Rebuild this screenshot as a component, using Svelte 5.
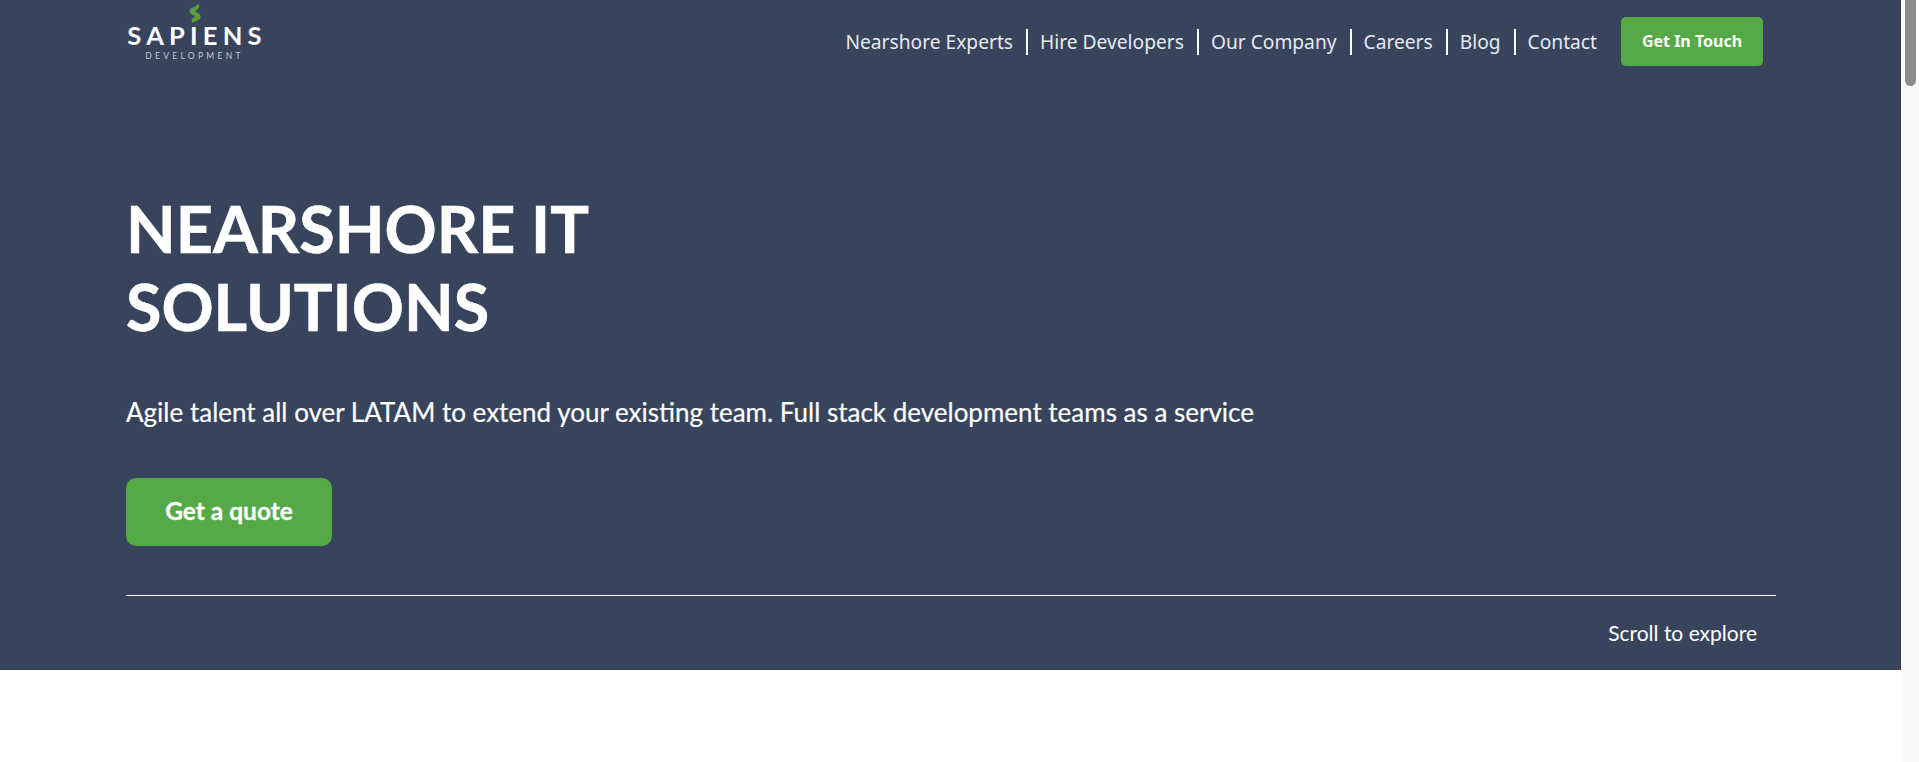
<script lang="ts">
	const links = ['Nearshore Experts', 'Hire Developers', 'Our Company', 'Careers', 'Blog', 'Contact'];
</script>

<div class="page">
	<main class="content">
		<section class="hero">
			<header class="topbar">
				<a class="logo" href="#home">
					<svg class="logo-mark" viewBox="0 0 12 20" aria-hidden="true">
						<path d="M9.5 0 C11.5 3 9.5 5.5 7 6.8 C6 7.4 6 8 7 8.4 C10.5 9.8 12.5 11.5 11.7 14.5 C11 17 7 18 2.8 20 C1.8 17 3 15 5 13.8 C6 13.2 6 12.6 5 12.2 C1.5 10.8 -0.3 9.5 0.2 7 C0.8 3.8 6.5 3.5 9.5 0 Z" />
					</svg>
					<span class="logo-name">SAPIENS</span>
					<span class="logo-sub">DEVELOPMENT</span>
				</a>
				<nav class="nav">
					<ul>
						{#each links as link}
							<li><a href="#{link}">{link}</a></li>
						{/each}
					</ul>
					<a class="touch" href="#touch">Get In Touch</a>
				</nav>
			</header>

			<div class="intro">
				<h1>NEARSHORE IT<br />SOLUTIONS</h1>
				<p>Agile talent all over LATAM to extend your existing team. Full stack development teams as a service</p>
				<a class="quote" href="#quote">Get a quote</a>
			</div>

			<div class="explore">
				<span>Scroll to explore</span>
			</div>
		</section>
	</main>
	<div class="scrollbar"><div class="thumb"></div></div>
</div>

<style>
	:global(body) {
		margin: 0;
		background: #fff;
		overflow: hidden;
	}

	.page {
		display: flex;
		height: 762px;
		overflow: hidden;
	}

	.content {
		flex: 1;
		min-width: 0;
	}

	.hero {
		height: 670px;
		box-sizing: border-box;
		background: #38445c;
		padding: 0 126px;
		color: #fff;
		font-family: 'Lato', sans-serif;
		display: flex;
		flex-direction: column;
	}

	.topbar {
		display: flex;
		justify-content: space-between;
		height: 66px;
		padding-right: 12px;
	}

	.logo {
		display: flex;
		flex-direction: column;
		align-items: center;
		width: 137px;
		color: #fff;
		text-decoration: none;
	}

	.logo-mark {
		width: 12px;
		height: 19px;
		margin-top: 4px;
		fill: #5a9e3f;
	}

	.logo-name {
		margin-right: -5px;
		font-size: 25.5px;
		font-weight: 700;
		line-height: 24px;
		letter-spacing: 5.2px;
		white-space: nowrap;
	}

	.logo-sub {
		margin-top: 4px;
		font-size: 8.5px;
		line-height: 10px;
		letter-spacing: 3.3px;
		color: #c5c9d1;
		white-space: nowrap;
	}

	.nav {
		display: flex;
		align-items: flex-start;
		gap: 24px;
		padding-top: 17px;
	}

	.nav ul {
		display: flex;
		list-style: none;
		margin: 12px 0 0;
		padding: 0;
		font-family: 'Noto Sans', sans-serif;
		font-size: 19.2px;
		line-height: 26px;
	}

	.nav li + li {
		border-left: 2px solid #fff;
		margin-left: 13px;
		padding-left: 12px;
	}

	.nav li a {
		color: #e6e9ee;
		text-decoration: none;
		white-space: nowrap;
	}

	.touch {
		width: 142px;
		height: 49px;
		box-sizing: border-box;
		padding-top: 13px;
		background: #55aa47;
		border-radius: 5px;
		color: #fff;
		font-family: 'Noto Sans', sans-serif;
		font-size: 16px;
		font-weight: 700;
		line-height: 22px;
		text-align: center;
		text-decoration: none;
	}

	.intro {
		flex: 1;
		padding-top: 123px;
	}

	h1 {
		margin: 0;
		font-size: 64.6px;
		font-weight: 700;
		line-height: 78px;
		-webkit-text-stroke: 0.6px #fff;
	}

	.intro p {
		margin: 49px 0 0;
		font-size: 26px;
		line-height: 36px;
		-webkit-text-stroke: 0.2px #fff;
	}

	.quote {
		display: block;
		width: 206px;
		height: 68px;
		margin-top: 48px;
		background: #55aa47;
		border-radius: 10px;
		color: #fff;
		font-size: 24.5px;
		font-weight: 700;
		line-height: 66px;
		text-align: center;
		text-decoration: none;
		-webkit-text-stroke: 0.3px #fff;
	}

	.explore {
		border-top: 1px solid #fff;
		height: 75px;
		padding: 0 19px 2px 0;
		margin-right: -1px;
		display: flex;
		justify-content: flex-end;
		align-items: center;
		box-sizing: border-box;
		font-size: 21px;
	}

	.scrollbar {
		width: 18px;
		background: #fafafa;
		flex: none;
	}

	.thumb {
		width: 11px;
		height: 86px;
		margin-left: 4px;
		background: #8c8c8c;
		border-radius: 0 0 6px 6px;
	}
</style>
